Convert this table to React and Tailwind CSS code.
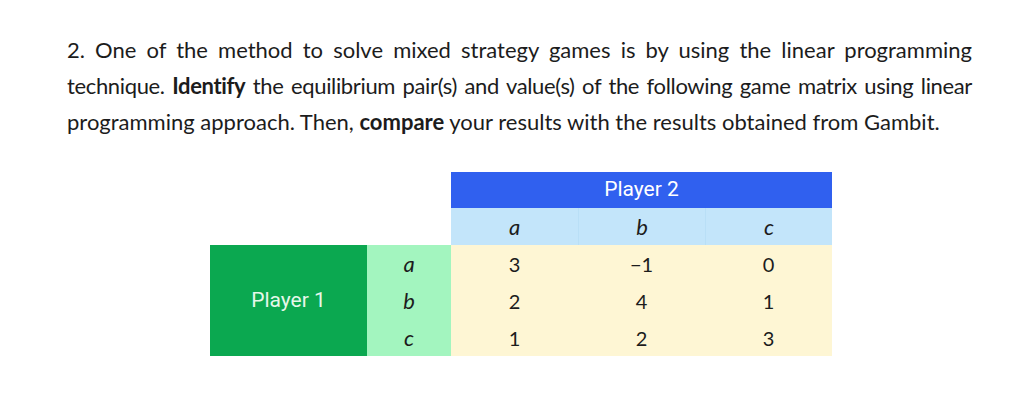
import React from 'react';

const cols = ['a', 'b', 'c'];
const rows = [
    ['a', [3, '\u22121', 0]],
    ['b', [2, 4, 1]],
    ['c', [1, 2, 3]],
];

const App = () => {
    return (
        <div className="w-[1011px] h-[403px] bg-white overflow-hidden font-['Lato',sans-serif] text-[#1c1c1c]">
            {/* Question text */}
            <div className="pl-[67px] pt-[32px] w-[972px] text-[22px] leading-[36px]">
                <p className="whitespace-nowrap text-justify [text-align-last:justify]">
                    2. One of the method to solve mixed strategy games is by using the linear programming
                </p>
                <p className="whitespace-nowrap tracking-[-0.35px] text-justify [text-align-last:justify]">
                    technique. <span className="font-bold">Identify</span> the equilibrium pair(s) and value(s) of the following game matrix using linear
                </p>
                <p className="whitespace-nowrap">
                    programming approach. Then, <span className="font-bold">compare</span> your results with the results obtained from Gambit.
                </p>
            </div>

            {/* Game matrix */}
            <div className="mt-[32px] ml-[210px] grid grid-cols-[157px_84px_127px_127px_127px] grid-rows-[36px_37px_37px_37px_37px] text-[20px]">
                <div className="col-span-2 row-span-2" />
                <div className="col-span-3 bg-[#3060ef] text-white text-[21px] flex items-center justify-center font-['Roboto',sans-serif]">
                    Player 2
                </div>
                {cols.map((c, i) => (
                    <div
                        key={c}
                        className={`bg-[#c3e5fa] flex items-center justify-center italic text-[22px] ${i > 0 ? 'border-l border-[#b9dff6]' : ''}`}
                    >
                        {c}
                    </div>
                ))}
                <div className="row-span-3 bg-[#0ba850] text-[#e6f7ea] text-[21px] flex items-center justify-center font-['Roboto',sans-serif]">
                    Player 1
                </div>
                {rows.map(([label, vals]) => (
                    <React.Fragment key={label}>
                        <div className="bg-[#a3f5bf] flex items-center justify-center italic text-[22px]">{label}</div>
                        {vals.map((v, j) => (
                            <div key={j} className="bg-[#fef6d4] flex items-center justify-center">
                                {v}
                            </div>
                        ))}
                    </React.Fragment>
                ))}
            </div>
        </div>
    );
};

export default App;
